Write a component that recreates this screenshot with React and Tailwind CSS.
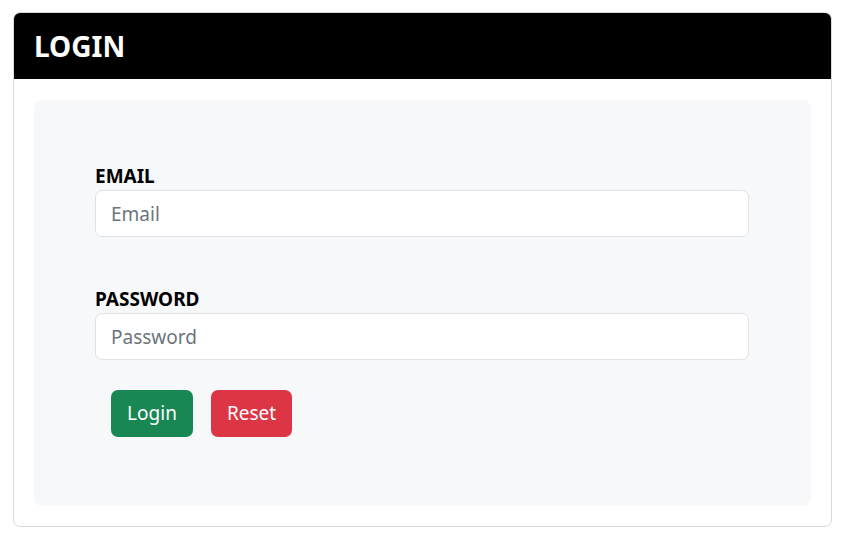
import React from 'react';

export default function App() {
  return (
    <div className="min-h-screen bg-white pt-[12px] pl-[13px]" style={{ fontFamily: '"Noto Sans", "Open Sans", sans-serif' }}>
      <div className="w-[819px] h-[515px] rounded-[7px] border border-[#d9d9d9] overflow-hidden flex flex-col">
        {/* Header */}
        <div className="h-[66px] bg-black flex items-center px-[20px]">
          <h1 className="text-white text-[28px] font-bold leading-none">LOGIN</h1>
        </div>

        {/* Body */}
        <div className="flex-1 p-[20px] pt-[21px]">
          <div className="h-full rounded-[8px] bg-[#f7f8f9] px-[61px] pt-[62px]">
            <div className="flex flex-col">
              <label className="text-[19px] font-bold text-black leading-[28px]">EMAIL</label>
              <input
                type="text"
                placeholder="Email"
                className="w-[654px] h-[47px] rounded-[7px] border border-[#dee2e6] bg-white px-[15px] text-[19px] text-[#212529] placeholder:text-[#6c757d] outline-none"
              />

              <label className="mt-[48px] text-[19px] font-bold text-black leading-[28px]">PASSWORD</label>
              <input
                type="password"
                placeholder="Password"
                className="w-[654px] h-[47px] rounded-[7px] border border-[#dee2e6] bg-white px-[15px] text-[19px] text-[#212529] placeholder:text-[#6c757d] outline-none"
              />

              <div className="mt-[30px] pl-[16px] flex gap-[18px]">
                <button className="h-[47px] w-[82px] rounded-[7px] bg-[#198754] text-white text-[19px]">Login</button>
                <button className="h-[47px] w-[81px] rounded-[7px] bg-[#dc3545] text-white text-[19px]">Reset</button>
              </div>
            </div>
          </div>
        </div>
      </div>
    </div>
  );
}
